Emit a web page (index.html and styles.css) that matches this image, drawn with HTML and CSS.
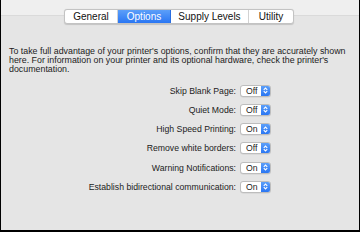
FILE: index.html
```html
<!DOCTYPE html>
<html>
<head>
<meta charset="utf-8">
<link rel="stylesheet" href="styles.css">
</head>
<body>
<div class="window">
  <div class="tabs">
    <div class="tab">General</div>
    <div class="tab selected">Options</div>
    <div class="tab">Supply Levels</div>
    <div class="tab last">Utility</div>
  </div>
  <p class="intro">To take full advantage of your printer's options, confirm that they are accurately shown here. For information on your printer and its optional hardware, check the printer's documentation.</p>
  <div class="rows">
    <div class="row"><span class="label">Skip Blank Page:</span><span class="popup"><span class="val">Off</span><span class="step"><svg viewBox="0 0 9 12" width="9" height="12"><path d="M2.6 5.2 4.5 3.3 6.4 5.2M2.6 6.8 4.5 8.7 6.4 6.8" fill="none" stroke="#fff" stroke-width="1.2"/></svg></span></span></div>
    <div class="row"><span class="label">Quiet Mode:</span><span class="popup"><span class="val">Off</span><span class="step"><svg viewBox="0 0 9 12" width="9" height="12"><path d="M2.6 5.2 4.5 3.3 6.4 5.2M2.6 6.8 4.5 8.7 6.4 6.8" fill="none" stroke="#fff" stroke-width="1.2"/></svg></span></span></div>
    <div class="row"><span class="label">High Speed Printing:</span><span class="popup"><span class="val">On</span><span class="step"><svg viewBox="0 0 9 12" width="9" height="12"><path d="M2.6 5.2 4.5 3.3 6.4 5.2M2.6 6.8 4.5 8.7 6.4 6.8" fill="none" stroke="#fff" stroke-width="1.2"/></svg></span></span></div>
    <div class="row"><span class="label">Remove white borders:</span><span class="popup"><span class="val">Off</span><span class="step"><svg viewBox="0 0 9 12" width="9" height="12"><path d="M2.6 5.2 4.5 3.3 6.4 5.2M2.6 6.8 4.5 8.7 6.4 6.8" fill="none" stroke="#fff" stroke-width="1.2"/></svg></span></span></div>
    <div class="row"><span class="label">Warning Notifications:</span><span class="popup"><span class="val">On</span><span class="step"><svg viewBox="0 0 9 12" width="9" height="12"><path d="M2.6 5.2 4.5 3.3 6.4 5.2M2.6 6.8 4.5 8.7 6.4 6.8" fill="none" stroke="#fff" stroke-width="1.2"/></svg></span></span></div>
    <div class="row"><span class="label">Establish bidirectional communication:</span><span class="popup"><span class="val">On</span><span class="step"><svg viewBox="0 0 9 12" width="9" height="12"><path d="M2.6 5.2 4.5 3.3 6.4 5.2M2.6 6.8 4.5 8.7 6.4 6.8" fill="none" stroke="#fff" stroke-width="1.2"/></svg></span></span></div>
  </div>
</div>
</body>
</html>
```

FILE: styles.css
```css
html, body {
  margin: 0;
  padding: 0;
}
body {
  width: 360px;
  height: 232px;
  overflow: hidden;
  font-family: "Liberation Sans", Arial, sans-serif;
  color: #1c1c1c;
}
.window {
  box-sizing: border-box;
  width: 360px;
  height: 232px;
  border-left: 1px solid #000;
  border-right: 1px solid #000;
  border-bottom: 2px solid #000;
  background:
    linear-gradient(to bottom, #efefef 0, #efefef 15px, #dadada 15px, #dadada 16px, #e5e5e5 16px, #e5e5e5 100%);
  display: flex;
  flex-direction: column;
}
.tabs {
  align-self: flex-start;
  margin: 9px 0 0 63px;
  height: 15px;
  box-sizing: border-box;
  display: flex;
  background: #fff;
  border: 1px solid #c3c3c3;
  border-radius: 3px;
  box-shadow: 0 0.5px 1px rgba(0,0,0,0.15);
  overflow: hidden;
}
.tab {
  font-size: 10px;
  line-height: 13px;
  text-align: center;
  color: #111;
  border-right: 1px solid #d2d2d2;
}
.tab:nth-child(1) { width: 52px; }
.tab:nth-child(2) { width: 52px; }
.tab:nth-child(3) { width: 77px; }
.tab:nth-child(4) { width: 44px; }
.tab.last { border-right: none; }
.tab.selected {
  background: linear-gradient(to bottom, #5c9ff9, #2a76f3);
  color: #fff;
  border-right-color: #2a6ee0;
}
.intro {
  margin: 22.5px 3px 0 8px;
  font-size: 8.85px;
  line-height: 9px;
  color: #1c1c1c;
}
.rows {
  margin-top: 11px;
  display: flex;
  flex-direction: column;
  gap: 7.3px;
}
.row {
  display: flex;
  align-items: center;
  height: 12px;
}
.label {
  width: 227px;
  margin-left: 8px;
  text-align: right;
  font-size: 8.7px;
  line-height: 12px;
  white-space: nowrap;
}
.popup {
  margin-left: 4px;
  width: 31px;
  height: 12px;
  box-sizing: border-box;
  display: flex;
  background: #fff;
  border: 1px solid #bdbdbd;
  border-radius: 3px;
  overflow: hidden;
  box-shadow: 0 0.5px 0.5px rgba(0,0,0,0.1);
}
.val {
  flex: 1;
  font-size: 8.7px;
  line-height: 10px;
  padding-left: 5px;
}
.step {
  width: 9px;
  height: 10px;
  display: flex;
  align-items: center;
  justify-content: center;
  background: linear-gradient(to bottom, #5c9ff9, #2a76f3);
}
.step svg {
  display: block;
  width: 9px;
  height: 11px;
}
```
